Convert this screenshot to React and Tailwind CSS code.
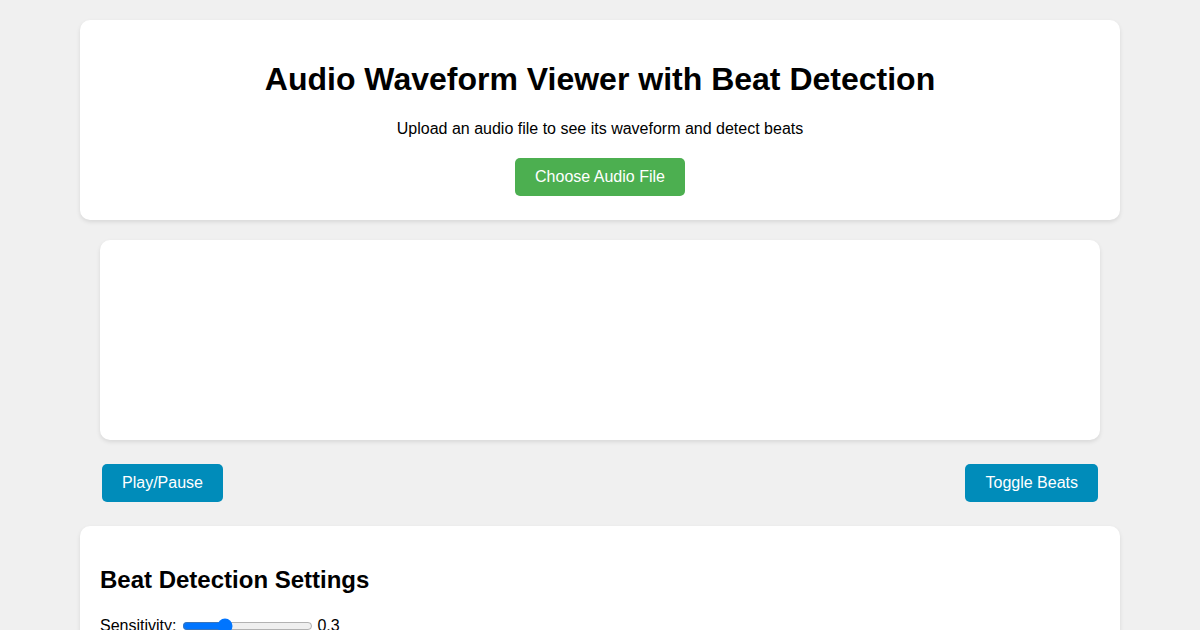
import { useState } from 'react';

const font = { fontFamily: '"Liberation Sans", Arial, sans-serif' };

function Button({ children, color = 'blue', onClick }) {
  const bg = color === 'green' ? 'bg-[#4CAF50]' : 'bg-[#008CBA]';
  return (
    <button
      onClick={onClick}
      className={`${bg} text-white text-base leading-[18px] px-5 py-[10px] rounded-[5px] cursor-pointer`}
    >
      {children}
    </button>
  );
}

export default function App() {
  const [sensitivity, setSensitivity] = useState(0.3);

  return (
    <div className="min-h-screen bg-[#f0f0f0] text-black" style={font}>
      <div className="w-[1040px] mx-auto pt-5">
        <div className="bg-white rounded-[10px] shadow-[0_2px_4px_rgba(0,0,0,0.1)] px-5 pt-5 pb-6 text-center">
          <h1 className="text-[32px] font-bold leading-[37px] mt-[21px] mb-[22px]">
            Audio Waveform Viewer with Beat Detection
          </h1>
          <p className="text-base leading-[18px]">
            Upload an audio file to see its waveform and detect beats
          </p>
          <div className="mt-5 flex justify-center">
            <Button color="green">Choose Audio File</Button>
          </div>
        </div>

        <div className="mx-5 mt-5 h-[200px] bg-white rounded-[10px] shadow-[0_2px_4px_rgba(0,0,0,0.1)]" />

        <div className="mx-5 mt-6 px-[2px] flex justify-between">
          <Button>Play/Pause</Button>
          <Button>Toggle Beats</Button>
        </div>

        <div className="mt-6 bg-white rounded-[10px] shadow-[0_2px_4px_rgba(0,0,0,0.1)] px-5 pt-5 pb-5">
          <h2 className="text-2xl font-bold leading-[28px] mt-5 mb-[23px]">Beat Detection Settings</h2>
          <div className="flex items-center text-base leading-[18px]">
            <label htmlFor="sens">Sensitivity:</label>
            <input
              id="sens"
              type="range"
              min="0"
              max="1"
              step="0.1"
              value={sensitivity}
              onChange={(e) => setSensitivity(parseFloat(e.target.value))}
              className="w-[131px] ml-[6px] mr-[4px]"
            />
            <span>{sensitivity}</span>
          </div>
        </div>
      </div>
    </div>
  );
}
